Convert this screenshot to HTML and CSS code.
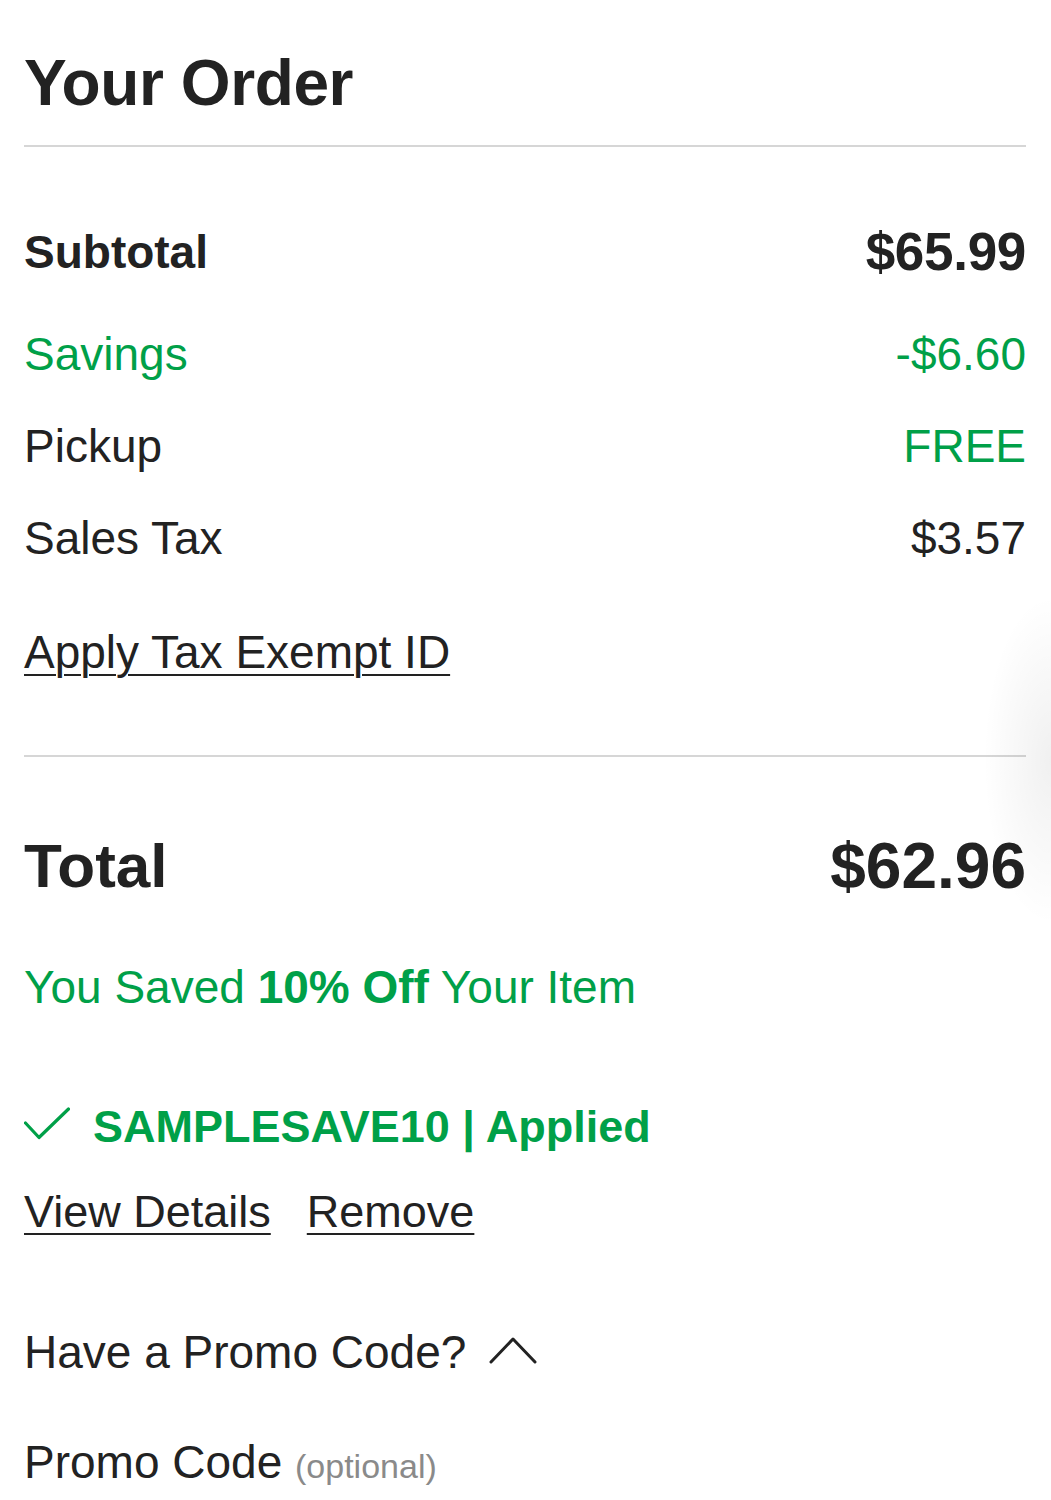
FILE: index.html
```html
<!DOCTYPE html>
<html lang="en">
<head>
<meta charset="utf-8">
<title>Your Order</title>
<link rel="stylesheet" href="styles.css">
</head>
<body>
<div class="page">
  <h1 class="title">Your Order</h1>
  <div class="rule rule-top"></div>

  <div class="row row-subtotal">
    <span class="sub-label">Subtotal</span>
    <span class="sub-value">$65.99</span>
  </div>
  <div class="row line row-savings green">
    <span>Savings</span>
    <span>-$6.60</span>
  </div>
  <div class="row line row-gap">
    <span>Pickup</span>
    <span class="green">FREE</span>
  </div>
  <div class="row line row-gap">
    <span>Sales Tax</span>
    <span>$3.57</span>
  </div>

  <div class="line tax-link"><a class="link" href="#">Apply Tax Exempt ID</a></div>

  <div class="rule rule-mid"></div>

  <div class="row row-total">
    <span class="total-label">Total</span>
    <span class="total-value">$62.96</span>
  </div>

  <div class="line saved green">You Saved <strong>10% Off</strong> Your Item</div>

  <div class="line applied green">
    <svg class="check" width="46" height="33" viewBox="0 0 46 33" aria-hidden="true">
      <path d="M1.5 16 L15 30.5 L44.5 2" fill="none" stroke="currentColor" stroke-width="3.2" stroke-linecap="round" stroke-linejoin="round"/>
    </svg>
    <strong>SAMPLESAVE10 | Applied</strong>
  </div>

  <div class="line actions">
    <a class="link" href="#">View Details</a>
    <a class="link" href="#">Remove</a>
  </div>

  <div class="line promo-toggle">
    <span>Have a Promo Code?</span>
    <svg class="chevron" width="48" height="29" viewBox="0 0 48 29" aria-hidden="true">
      <path d="M2 26 L24 3 L46 26" fill="none" stroke="currentColor" stroke-width="3" stroke-linecap="round" stroke-linejoin="round"/>
    </svg>
  </div>

  <div class="line promo-label">Promo Code <span class="optional">(optional)</span></div>

  <div class="edge-shadow"></div>
</div>
</body>
</html>
```

FILE: styles.css
```css
* { box-sizing: border-box; }

html, body {
  margin: 0;
  padding: 0;
  background: #ffffff;
}

body {
  font-family: "Liberation Sans", Arial, Helvetica, sans-serif;
  color: #222222;
  overflow: hidden;
}

.page {
  position: relative;
  width: 1051px;
  height: 1500px;
  padding: 51px 25px 0 24px;
}

.title {
  margin: 0;
  font-size: 64px;
  line-height: 64px;
  font-weight: 700;
  letter-spacing: -0.4px;
}

.rule {
  height: 2px;
  background: #d6d6d6;
}

.rule-top { margin-top: 30px; }

.green { color: #00a048; }

.row {
  display: flex;
  justify-content: space-between;
  align-items: center;
}

.line {
  font-size: 46px;
  line-height: 52px;
}

.row-subtotal {
  margin-top: 75px;
  height: 60px;
  font-weight: 700;
}

.sub-label {
  font-size: 46px;
  line-height: 60px;
}

.sub-value {
  font-size: 53px;
  line-height: 60px;
  letter-spacing: -0.3px;
}

.row-savings { margin-top: 46px; }
.row-gap { margin-top: 40px; }

.tax-link { margin-top: 62px; }

.link {
  color: #222222;
  text-decoration: underline;
  text-decoration-thickness: 2px;
  text-underline-offset: 6px;
}

.rule-mid { margin-top: 77px; }

.row-total {
  margin-top: 74px;
  height: 70px;
  font-weight: 700;
}

.total-label {
  font-size: 62px;
  line-height: 70px;
}

.total-value {
  font-size: 64px;
  line-height: 70px;
  letter-spacing: 0;
}

.saved { margin-top: 60px; }

.saved strong { font-weight: 700; }

.applied {
  margin-top: 88px;
  display: flex;
  align-items: flex-start;
  gap: 23px;
  font-size: 45px;
}

.check {
  display: block;
  margin-top: 6px;
  flex: none;
}

.actions {
  margin-top: 33px;
  display: flex;
  gap: 36px;
  font-size: 45px;
}

.promo-toggle {
  margin-top: 88px;
  display: flex;
  align-items: flex-start;
  gap: 23px;
}

.chevron {
  display: block;
  margin-top: 10px;
  flex: none;
  color: #222222;
}

.promo-label { margin-top: 58px; }

.optional {
  font-size: 34px;
  color: #8a8a8a;
}

.edge-shadow {
  position: absolute;
  right: 0;
  top: 540px;
  width: 90px;
  height: 440px;
  background: radial-gradient(ellipse 100% 50% at 100% 50%, rgba(0, 0, 0, 0.06), rgba(0, 0, 0, 0) 75%);
  pointer-events: none;
}
```
